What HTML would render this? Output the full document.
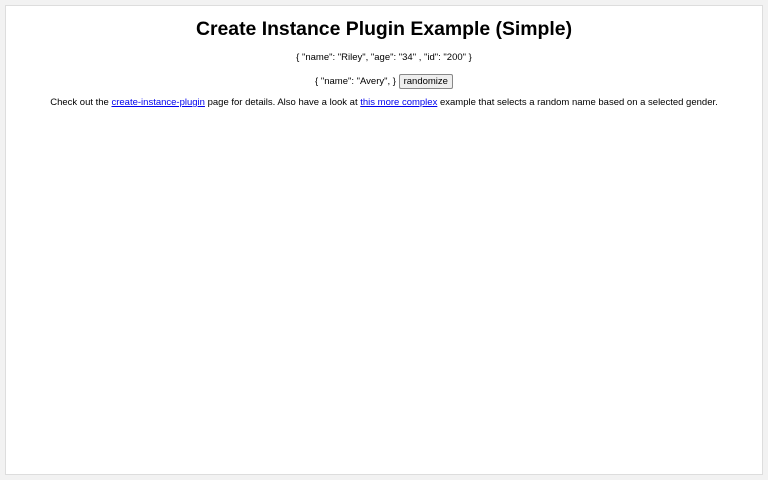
<!DOCTYPE html>
<html><head><style>
html,body{margin:0;padding:0;background:#f2f2f2;width:768px;height:480px;overflow:hidden}
.box{position:absolute;left:5px;top:5px;width:756px;height:468px;background:#fff;border:1px solid #ddd;font-family:"Liberation Sans",sans-serif;color:#000;text-align:center}
h1{font-size:19.4px;font-weight:bold;margin:0;position:absolute;top:11px;left:0;right:0;line-height:24px}
.l{position:absolute;left:0;right:0;font-size:9.5px;line-height:12px}
a{color:#00e}
button{font-family:"Liberation Sans",sans-serif;font-size:9.5px;padding:1px 4px;border:1px solid #888;border-radius:2px;background:#eee;height:15px;line-height:11px;vertical-align:middle}
</style></head><body><div class="box">
<h1>Create Instance Plugin Example (Simple)</h1>
<div class="l" style="top:46px">{ "name": "Riley", "age": "34" , "id": "200" }</div>
<div class="l" style="top:68px">{ "name": "Avery", } <button>randomize</button></div>
<div class="l" style="top:91px">Check out the <a href="#">create-instance-plugin</a> page for details. Also have a look at <a href="#">this more complex</a> example that selects a random name based on a selected gender.</div>
</div></body></html>
